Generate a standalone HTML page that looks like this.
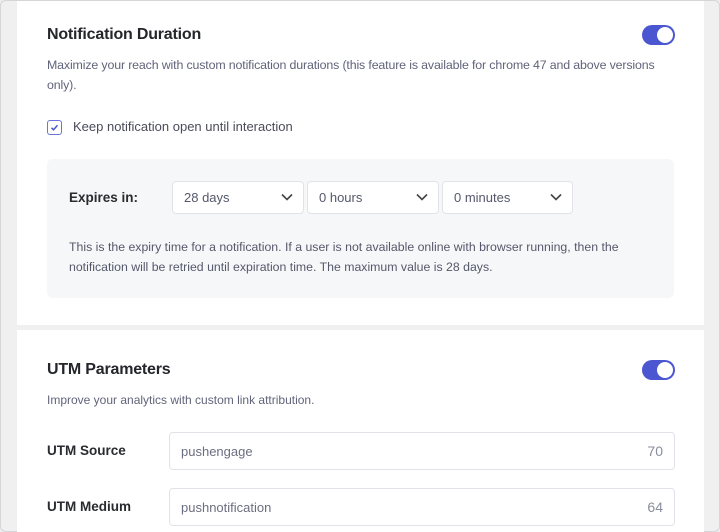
<!DOCTYPE html>
<html><head><style>
*{box-sizing:border-box;margin:0;padding:0}
body{width:720px;height:532px;background:#ececee;font-family:"Liberation Sans",sans-serif;position:relative;overflow:hidden}
.frame{position:absolute;left:0;top:0;width:720px;height:532px;border:1px solid #d6d6d8;border-radius:6px;background:#f0f0f1}
.card{position:absolute;left:17px;width:687px;background:#fff}
.abs{position:absolute}
h2{position:absolute;font-size:16px;font-weight:bold;color:#25262b;letter-spacing:-0.2px}
.p{position:absolute;font-size:12.5px;color:#61647a;line-height:20px}
.tog{position:absolute;width:33px;height:20px;border-radius:10px;background:#4b57d1}
.tog:after{content:"";position:absolute;right:2px;top:2px;width:16px;height:16px;border-radius:50%;background:#fff}
.sel{position:absolute;top:181px;height:33px;border:1px solid #e2e3e8;border-radius:4px;background:#fff;font-size:13px;color:#55586a;padding:8px 0 0 11px}
.sel svg{position:absolute;right:10px;top:11px}
.lab{position:absolute;font-size:13.5px;font-weight:bold;color:#2a2b30}
.in{position:absolute;left:169px;width:506px;height:38px;border:1px solid #e2e3e8;border-radius:4px;font-size:13px;color:#6b6e80;padding:11px 0 0 11px}
.in span{position:absolute;right:11px;top:10px;font-size:14px;color:#8a8d9b}
</style></head><body>
<div class="frame"></div>
<div class="card" style="top:1px;height:324px"></div>
<div class="card" style="top:330px;height:202px"></div>
<h2 style="left:47px;top:26px">Notification Duration</h2>
<div class="tog" style="left:642px;top:25px"></div>
<div class="p" style="left:47px;top:55px;width:640px;font-size:12.4px;letter-spacing:-0.15px">Maximize your reach with custom notification durations (this feature is available for chrome 47 and above versions only).</div>
<div class="abs" style="left:47px;top:120px;width:15px;height:15px;border:1px solid #6b74d8;border-radius:3px"><svg width="13" height="13" viewBox="0 0 13 13" style="position:absolute;left:0;top:0"><path d="M3.5 6.8l2 2 4-4.5" fill="none" stroke="#4b57d1" stroke-width="1.5"/></svg></div>
<div class="p" style="left:73px;top:117px;color:#4a4c5a;font-size:13px">Keep notification open until interaction</div>
<div class="abs" style="left:47px;top:159px;width:627px;height:139px;background:#f6f7f9;border-radius:6px"></div>
<div class="lab" style="left:69px;top:190px">Expires in:</div>
<div class="sel" style="left:172px;width:132px">28 days<svg width="12" height="8" viewBox="0 0 12 8"><path d="M1 1.5l5 5 5-5" fill="none" stroke="#444" stroke-width="1.6"/></svg></div>
<div class="sel" style="left:307px;width:132px">0 hours<svg width="12" height="8" viewBox="0 0 12 8"><path d="M1 1.5l5 5 5-5" fill="none" stroke="#444" stroke-width="1.6"/></svg></div>
<div class="sel" style="left:442px;width:131px">0 minutes<svg width="12" height="8" viewBox="0 0 12 8"><path d="M1 1.5l5 5 5-5" fill="none" stroke="#444" stroke-width="1.6"/></svg></div>
<div class="p" style="left:69px;top:237px;width:590px;font-size:12.3px;color:#55586a">This is the expiry time for a notification. If a user is not available online with browser running, then the notification will be retried until expiration time. The maximum value is 28 days.</div>
<h2 style="left:47px;top:361px">UTM Parameters</h2>
<div class="tog" style="left:642px;top:360px"></div>
<div class="p" style="left:47px;top:390px;font-size:12px">Improve your analytics with custom link attribution.</div>
<div class="lab" style="left:47px;top:443px">UTM Source</div>
<div class="in" style="top:432px">pushengage<span>70</span></div>
<div class="lab" style="left:47px;top:499px">UTM Medium</div>
<div class="in" style="top:488px">pushnotification<span>64</span></div>
</body></html>
